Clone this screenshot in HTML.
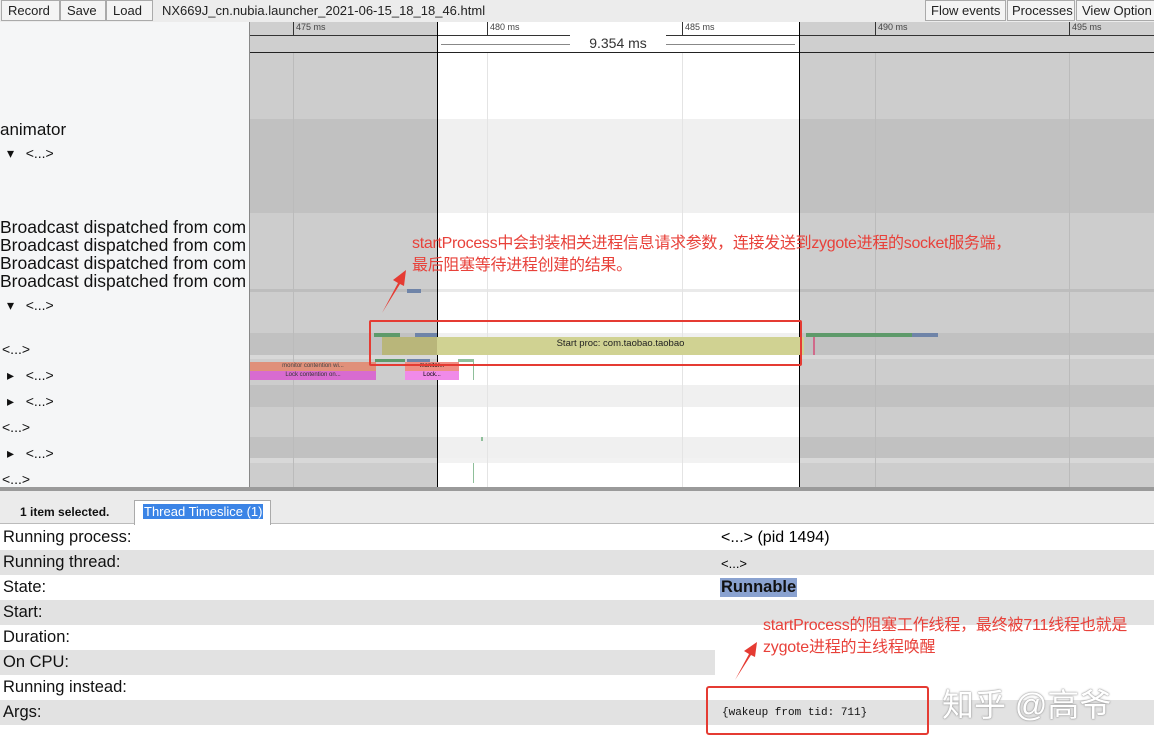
<!DOCTYPE html>
<html><head><meta charset="utf-8"><style>
*{margin:0;padding:0;box-sizing:border-box}
body{width:1154px;height:746px;overflow:hidden;background:#fff;font-family:"Liberation Sans","Noto Sans CJK SC",sans-serif;position:relative}
.a{position:absolute}
.btn{position:absolute;top:0;height:21px;border:1px solid #aaa;background:#f4f4f4;font-size:13px;line-height:19px;padding:0 6px;color:#222;white-space:nowrap;overflow:hidden}
.lbl{position:absolute;left:0;font-size:17px;color:#111;white-space:nowrap}
.tk{position:absolute;font-size:9px;color:#444}
.row{position:absolute;left:0;width:1154px;height:25px;font-size:16.5px;line-height:25px;color:#111;padding-left:3px}
.red{color:#e8413a;font-family:"Liberation Sans","Noto Sans CJK SC",sans-serif}
</style></head><body>
<div class="a" style="left:0;top:0;width:1154px;height:22px;background:#ececec"></div>
<div class="btn" style="left:1px;width:59px">Record</div>
<div class="btn" style="left:60px;width:46px">Save</div>
<div class="btn" style="left:106px;width:47px">Load</div>
<div class="a" style="left:162px;top:3px;font-size:13px;color:#222">NX669J_cn.nubia.launcher_2021-06-15_18_18_46.html</div>
<div class="btn" style="left:925px;width:81px;padding:0 5px">Flow events</div>
<div class="btn" style="left:1007px;width:68px;padding:0 4px">Processes</div>
<div class="btn" style="left:1076px;width:80px;padding:0 5px">View Option</div>
<div class="a" style="left:0;top:22px;width:249px;height:465px;background:#f5f6f7"></div>
<div class="a" style="left:249px;top:22px;width:905px;height:31px;background:#cfcfcf"></div>
<div class="a" style="left:437px;top:22px;width:362px;height:31px;background:#fff"></div>
<div class="a" style="left:249px;top:35px;width:905px;height:1px;background:#333"></div>
<div class="a" style="left:249px;top:52px;width:905px;height:1px;background:#222"></div>
<div class="a" style="left:293px;top:22px;width:1px;height:13px;background:#333"></div><div class="tk" style="left:296px;top:22px">475 ms</div>
<div class="a" style="left:487px;top:22px;width:1px;height:13px;background:#333"></div><div class="tk" style="left:490px;top:22px">480 ms</div>
<div class="a" style="left:682px;top:22px;width:1px;height:13px;background:#333"></div><div class="tk" style="left:685px;top:22px">485 ms</div>
<div class="a" style="left:875px;top:22px;width:1px;height:13px;background:#333"></div><div class="tk" style="left:878px;top:22px">490 ms</div>
<div class="a" style="left:1069px;top:22px;width:1px;height:13px;background:#333"></div><div class="tk" style="left:1072px;top:22px">495 ms</div>
<div class="a" style="left:441px;top:44px;width:354px;height:1px;background:#888"></div>
<div class="a" style="left:570px;top:35px;width:96px;height:16px;background:#fff;text-align:center;font-size:14px;color:#333">9.354 ms</div>
<div class="a" style="left:249px;top:53px;width:905px;height:434px;background:#cdcdcd"></div>
<div class="a" style="left:249px;top:119px;width:905px;height:94px;background:#c1c1c1"></div>
<div class="a" style="left:249px;top:289px;width:905px;height:3px;background:#bdbdbd"></div>
<div class="a" style="left:249px;top:333px;width:905px;height:22px;background:#c1c1c1"></div>
<div class="a" style="left:249px;top:355px;width:905px;height:4px;background:#d8d8d8"></div>
<div class="a" style="left:249px;top:385px;width:905px;height:22px;background:#c1c1c1"></div>
<div class="a" style="left:249px;top:437px;width:905px;height:21px;background:#c1c1c1"></div>
<div class="a" style="left:249px;top:458px;width:905px;height:5px;background:#d8d8d8"></div>
<div class="a" style="left:437px;top:53px;width:362px;height:434px;background:#fff"></div>
<div class="a" style="left:437px;top:119px;width:362px;height:94px;background:#f0f0f0"></div>
<div class="a" style="left:437px;top:289px;width:362px;height:3px;background:#eaeaea"></div>
<div class="a" style="left:437px;top:333px;width:362px;height:22px;background:#f0f0f0"></div>
<div class="a" style="left:437px;top:385px;width:362px;height:22px;background:#f0f0f0"></div>
<div class="a" style="left:437px;top:437px;width:362px;height:21px;background:#f0f0f0"></div>
<div class="a" style="left:437px;top:458px;width:362px;height:5px;background:#f2f2f2"></div>
<div class="a" style="left:293px;top:53px;width:1px;height:434px;background:#bbb"></div>
<div class="a" style="left:487px;top:53px;width:1px;height:434px;background:#e4e4e4"></div>
<div class="a" style="left:682px;top:53px;width:1px;height:434px;background:#e4e4e4"></div>
<div class="a" style="left:875px;top:53px;width:1px;height:434px;background:#bbb"></div>
<div class="a" style="left:1069px;top:53px;width:1px;height:434px;background:#bbb"></div>
<div class="a" style="left:437px;top:22px;width:1px;height:465px;background:#000"></div>
<div class="a" style="left:799px;top:22px;width:1px;height:465px;background:#000"></div>
<div class="a" style="left:249px;top:22px;width:1px;height:465px;background:#888"></div>
<div class="a" style="left:407px;top:289px;width:14px;height:4px;background:#6f84a8"></div>
<div class="a" style="left:374px;top:333px;width:26px;height:4px;background:#5e9a6a"></div>
<div class="a" style="left:415px;top:333px;width:22px;height:4px;background:#6f84a8"></div>
<div class="a" style="left:382px;top:337px;width:55px;height:18px;background:#b9b67a"></div>
<div class="a" style="left:437px;top:337px;width:367px;height:18px;background:#d0d292;font-size:9.5px;text-align:center;line-height:13px;color:#222">Start proc: com.taobao.taobao</div>
<div class="a" style="left:806px;top:333px;width:106px;height:4px;background:#5e9a6a"></div>
<div class="a" style="left:912px;top:333px;width:26px;height:4px;background:#6f84a8"></div>
<div class="a" style="left:813px;top:337px;width:2px;height:18px;background:#d06a8a"></div>
<div class="a" style="left:375px;top:359px;width:30px;height:3px;background:#5e9a6a"></div>
<div class="a" style="left:407px;top:359px;width:23px;height:3px;background:#6f84a8"></div>
<div class="a" style="left:458px;top:359px;width:16px;height:3px;background:#8fbf9a"></div>
<div class="a" style="left:250px;top:362px;width:126px;height:9px;background:#e0907a;font-size:6px;text-align:center;color:#444;line-height:9px">monitor contention wi...</div>
<div class="a" style="left:250px;top:371px;width:126px;height:9px;background:#d86bd0;font-size:6px;text-align:center;color:#333;line-height:9px">Lock contention on...</div>
<div class="a" style="left:405px;top:362px;width:54px;height:9px;background:#ef8e84;font-size:6px;text-align:center;line-height:9px">monitor...</div>
<div class="a" style="left:405px;top:371px;width:54px;height:9px;background:#f08ae8;font-size:6px;text-align:center;line-height:9px">Lock...</div>
<div class="a" style="left:473px;top:362px;width:1px;height:18px;background:#8fbf9a"></div>
<div class="a" style="left:481px;top:437px;width:2px;height:4px;background:#8fbf9a"></div>
<div class="a" style="left:473px;top:463px;width:1px;height:20px;background:#8fbf9a"></div>
<div class="lbl" style="top:120px">animator</div>
<div class="lbl" style="top:145px;left:7px;font-size:14px">▾&nbsp;&nbsp; &lt;...&gt;</div>
<div class="lbl" style="top:218px;line-height:18px;font-size:17.5px">Broadcast dispatched from com<br>Broadcast dispatched from com<br>Broadcast dispatched from com<br>Broadcast dispatched from com</div>
<div class="lbl" style="top:297px;left:7px;font-size:14px">▾&nbsp;&nbsp; &lt;...&gt;</div>
<div class="lbl" style="top:341px;left:2px;font-size:14px">&lt;...&gt;</div>
<div class="lbl" style="top:367px;left:7px;font-size:14px">▸&nbsp;&nbsp; &lt;...&gt;</div>
<div class="lbl" style="top:393px;left:7px;font-size:14px">▸&nbsp;&nbsp; &lt;...&gt;</div>
<div class="lbl" style="top:419px;left:2px;font-size:14px">&lt;...&gt;</div>
<div class="lbl" style="top:445px;left:7px;font-size:14px">▸&nbsp;&nbsp; &lt;...&gt;</div>
<div class="lbl" style="top:471px;left:2px;font-size:14px">&lt;...&gt;</div>
<div class="a red" style="left:412px;top:233px;font-size:16px;line-height:22px;white-space:nowrap;letter-spacing:-0.3px">startProcess中会封装相关进程信息请求参数，连接发送到zygote进程的socket服务端，<br>最后阻塞等待进程创建的结果。</div>
<div class="a" style="left:369px;top:320px;width:433px;height:46px;border:2px solid #e53b33;border-radius:2px"></div>
<svg class="a" style="left:378px;top:268px" width="30" height="48"><path d="M4 45 L20 15 L15 12 L28 2 L26 18 L22 16 Z" fill="#e53b33"/></svg>
<div class="a" style="left:0;top:487px;width:1154px;height:4px;background:#9a9a9a"></div>
<div class="a" style="left:0;top:491px;width:1154px;height:33px;background:#ebebeb;border-bottom:1px solid #bbb"></div>
<div class="a" style="left:20px;top:505px;font-size:12px;font-weight:bold;color:#111">1 item selected.</div>
<div class="a" style="left:134px;top:500px;width:137px;height:25px;background:#fff;border:1px solid #aaa;border-bottom:none"></div>
<div class="a" style="left:143px;top:504px;font-size:13px;background:#3b84e6;color:#fff;padding:0 1px">Thread Timeslice (1)</div>
<div class="row" style="top:525px">Running process:</div>
<div class="row" style="top:550px;background:#e2e2e2">Running thread:</div>
<div class="row" style="top:575px">State:</div>
<div class="row" style="top:600px;background:#e2e2e2">Start:</div>
<div class="row" style="top:625px">Duration:</div>
<div class="row" style="top:650px;background:#e2e2e2;width:715px">On CPU:</div>
<div class="row" style="top:675px">Running instead:</div>
<div class="row" style="top:700px;background:#e2e2e2">Args:</div>
<div class="a" style="left:721px;top:529px;font-size:16px">&lt;...&gt; (pid 1494)</div>
<div class="a" style="left:721px;top:556px;font-size:13px">&lt;...&gt;</div>
<div class="a" style="left:720px;top:578px;font-size:16.5px;font-weight:bold;background:#8aa2d0;color:#111;padding:0 1px">Runnable</div>
<div class="a red" style="left:763px;top:615px;font-size:16px;line-height:22px;white-space:nowrap;letter-spacing:-0.2px">startProcess的阻塞工作线程，最终被711线程也就是<br>zygote进程的主线程唤醒</div>
<svg class="a" style="left:732px;top:640px" width="28" height="42"><path d="M3 40 L17 14 L12 11 L25 2 L23 17 L19 15 Z" fill="#e53b33"/></svg>
<div class="a" style="left:706px;top:686px;width:223px;height:49px;border:2px solid #e53b33;border-radius:3px"></div>
<div class="a" style="left:722px;top:707px;font-family:'Liberation Mono',monospace;font-size:11px;color:#111">{wakeup from tid: 711}</div>
<div class="a" style="left:942px;top:680px;font-size:32px;color:#fff;text-shadow:0 0 2px #999,0 0 1px #777;white-space:nowrap">知乎 @高爷</div>
</body></html>
